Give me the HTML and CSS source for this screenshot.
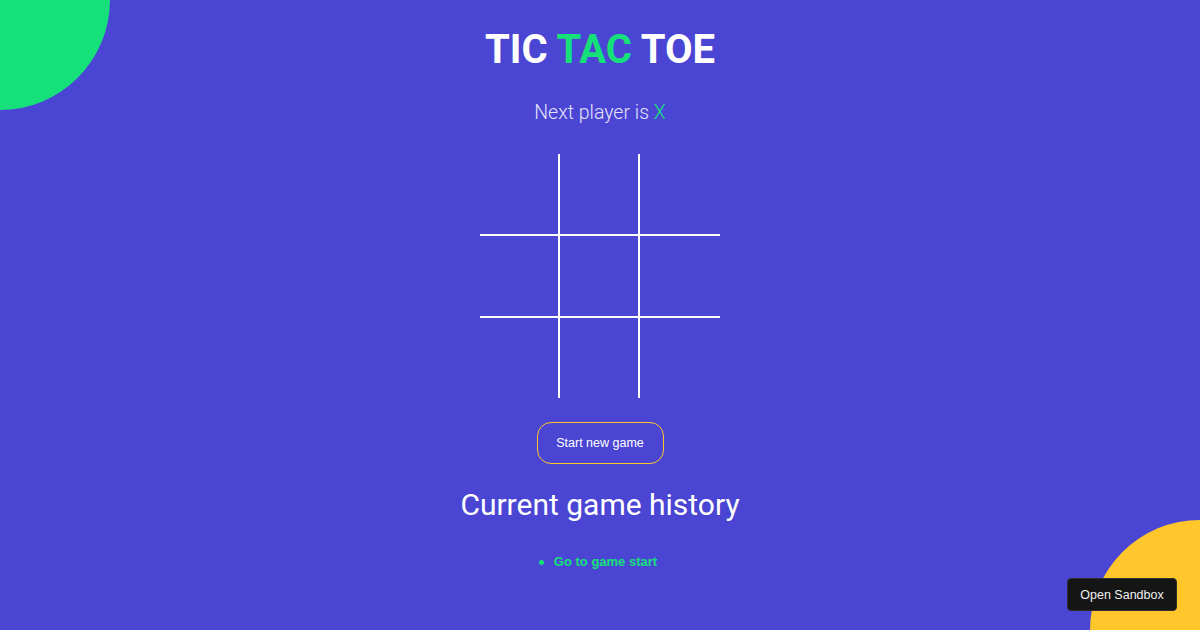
FILE: index.html
```html
<!DOCTYPE html>
<html>
<head>
  <title>Tic Tac Toe</title>
  <link rel="stylesheet" href="styles.css">
</head>
<body>
<div class="blob blob-green"></div>
<div class="blob blob-yellow"></div>

<main class="game">
  <h1 class="title">TIC <span class="accent">TAC</span> TOE</h1>
  <p class="status">Next player is <span class="accent">X</span></p>

  <div class="board">
    <button class="square"></button>
    <button class="square"></button>
    <button class="square"></button>
    <button class="square"></button>
    <button class="square"></button>
    <button class="square"></button>
    <button class="square"></button>
    <button class="square"></button>
    <button class="square"></button>
  </div>

  <button type="button" class="btn-reset">Start new game</button>

  <h2 class="history-title">Current game history</h2>
  <ul class="history">
    <li><button type="button" class="btn-move">Go to game start</button></li>
  </ul>
</main>

<a class="sandbox" href="#">Open Sandbox</a>
</body>
</html>
```

FILE: styles.css
```css
body {
  margin: 0;
  height: 630px;
  overflow: hidden;
  background: #4b45d4;
  color: #fff;
  font-family: Roboto, "Liberation Sans", sans-serif;
}

/* corner decorations: quarter circles */
.blob {
  position: absolute;
  width: 110px;
  height: 110px;
}
.blob-green {
  top: 0;
  left: 0;
  background: #16e07a;
  border-bottom-right-radius: 100%;
}
.blob-yellow {
  bottom: 0;
  right: 0;
  background: #ffc72c;
  border-top-left-radius: 100%;
}

.game {
  position: relative;
  display: flex;
  flex-direction: column;
  align-items: center;
}

.accent { color: #16e07a; }

.title {
  margin: 26px 0 0;
  font-size: 40px;
  line-height: 48px;
  font-weight: 700;
}

.status {
  margin: 27px 0 0;
  font-size: 19.5px;
  line-height: 24px;
  font-weight: 300;
  color: #e4e2f8;
}

.board {
  margin-top: 29px;
  display: grid;
  grid-template-columns: 80px 80px 80px;
  grid-template-rows: 82px 82px 80px;
}
.square {
  background: none;
  border: 0;
  padding: 0;
  border-right: 2px solid #fff;
  border-bottom: 2px solid #fff;
}
.square:nth-child(3n) { border-right: 0; }
.square:nth-child(n+7) { border-bottom: 0; }

.btn-reset {
  margin-top: 24px;
  width: 127px;
  height: 42px;
  background: none;
  border: 1px solid #ffc72c;
  border-radius: 14px;
  color: #fff;
  font-family: "Liberation Sans", Arial, sans-serif;
  font-size: 12.5px;
}

.history-title {
  margin: 23px 0 0;
  font-size: 30px;
  line-height: 36px;
  font-weight: 400;
}

.history {
  margin: 31px 0 0 -4px;
  padding: 0;
  list-style: none;
}
.history li {
  display: flex;
  align-items: center;
  gap: 10px;
}
.history li::before {
  content: "";
  width: 5px;
  height: 5px;
  border-radius: 50%;
  background: #16e07a;
}
.btn-move {
  background: none;
  border: 0;
  padding: 0;
  color: #16e07a;
  font-family: "Liberation Sans", Arial, sans-serif;
  font-size: 13px;
  line-height: 16px;
  font-weight: 700;
}

.sandbox {
  position: fixed;
  right: 23px;
  bottom: 19px;
  width: 110px;
  height: 33px;
  box-sizing: border-box;
  display: flex;
  align-items: center;
  justify-content: center;
  background: #151515;
  border: 1px solid #2e2e2e;
  border-radius: 4px;
  color: #f0f0f0;
  font-family: "Liberation Sans", Arial, sans-serif;
  font-size: 12.5px;
  text-decoration: none;
}
```
